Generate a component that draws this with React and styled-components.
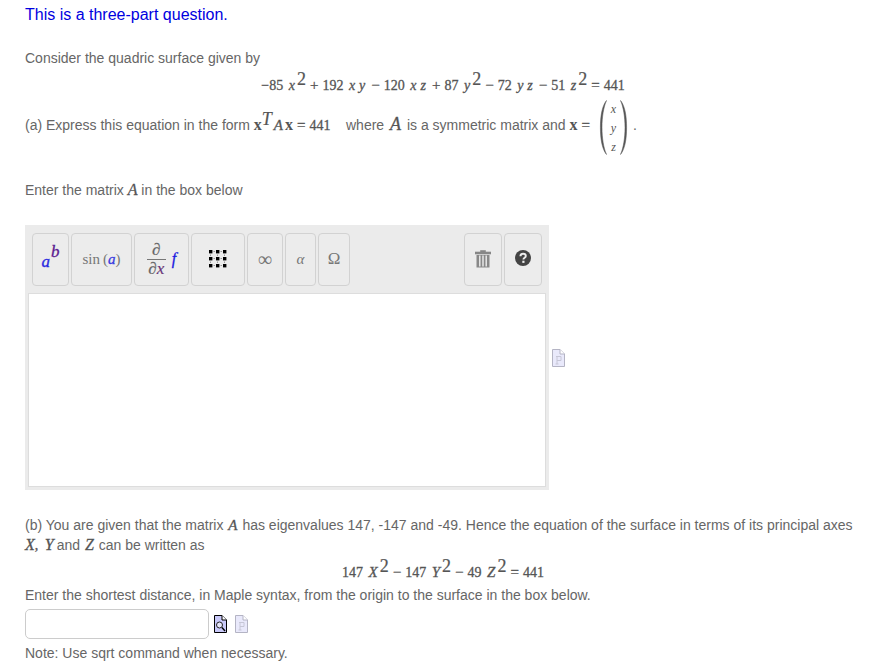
import React from 'react'
import styled, { createGlobalStyle } from 'styled-components'

const GlobalStyle = createGlobalStyle`
  html, body { margin: 0; padding: 0; background: #fff; }
  body { font-family: "Liberation Sans", Arial, sans-serif; font-size: 14px; color: #666; }
`
const Page = styled.div`
  width: 836px;
  padding: 5px 0 0 25px;
`
const Title = styled.div`
  font-size: 16px;
  line-height: 20px;
  color: #0000e0;
`
const Para = styled.div`
  line-height: 20px;
  margin-top: ${p => p.$top || 0}px;
`
const Equation = styled.div`
  text-align: center;
  line-height: 20px;
  margin-top: ${p => p.$top || 0}px;
`
const M = styled.span`
  font-family: "Liberation Serif", "DejaVu Serif", serif;
  font-size: 14px;
  color: #555;
  -webkit-text-stroke: 0.3px #555;
  white-space: pre;
`
const Op = styled(M)`
  margin: 0 4px;
  font-size: 15px;
`
const V = styled.i`
  font-family: "Liberation Serif", "DejaVu Serif", serif;
  font-size: ${p => p.$size || 14}px;
  color: #555;
  -webkit-text-stroke: 0.3px #555;
  padding: 0 ${p => p.$pad ?? 2}px;
`
const B = styled.b`
  font-family: "Liberation Serif", "DejaVu Serif", serif;
  font-size: 16px;
  color: #555;
`
const Sup = styled.sup`
  font-family: "Liberation Serif", "DejaVu Serif", serif;
  font-size: 18px;
  line-height: 0;
  vertical-align: 5px;
  color: #555;
  -webkit-text-stroke: 0.2px #555;
`
const Vector = styled.span`
  display: inline-flex;
  align-items: center;
  vertical-align: -25px;
  height: 57px;
  margin: 0 5px 0 5px;
`
const Entries = styled.span`
  display: flex;
  flex-direction: column;
  justify-content: space-between;
  align-items: center;
  width: 13px;
  height: 52px;
`
const Entry = styled.i`
  font-family: "Liberation Serif", serif;
  font-size: 12px;
  line-height: 14px;
  color: #555;
`
const EditorRow = styled.div`
  display: flex;
  align-items: center;
  margin-top: 25px;
`
const Editor = styled.div`
  width: 524px;
  height: 265px;
  box-sizing: border-box;
  background: #ebebeb;
  padding: 0 3px 3px;
  display: flex;
  flex-direction: column;
`
const Toolbar = styled.div`
  height: 68px;
  flex: none;
  display: flex;
  align-items: center;
  gap: 2px;
  padding: 0 4px;
`
const ToolButton = styled.div`
  width: ${p => p.$w}px;
  height: 53px;
  box-sizing: border-box;
  border: 1px solid #d2d2d2;
  border-radius: 4px;
  background: #ececec;
  display: flex;
  align-items: center;
  justify-content: center;
  font-family: "Liberation Serif", serif;
  font-size: ${p => p.$font || 15}px;
  color: #777;
  margin-left: ${p => p.$left || 0}px;
`
const EditArea = styled.div`
  flex: 1;
  background: #fff;
  border: 1px solid #ddd;
`
const Power = styled.span`
  font-size: 17px;
  font-style: italic;
  color: #2a2ae0;
  -webkit-text-stroke: 0.3px #2a2ae0;
  position: relative;
  top: 3px;
  & > span {
    position: relative;
    top: -10px;
    color: #5a1a90;
    -webkit-text-stroke: 0.3px #5a1a90;
    margin-left: 1px;
  }
`
const Blue = styled.i`
  color: #3a3ae0;
  -webkit-text-stroke: 0.3px #3a3ae0;
`
const Fraction = styled.span`
  display: inline-flex;
  flex-direction: column;
  align-items: center;
  font-size: 17px;
  line-height: 17px;
  color: #666;
  -webkit-text-stroke: 0.2px #666;
  & > span:first-child { border-bottom: 1px solid #777; padding-bottom: 1px; width: 19px; text-align: center; }
  & i { color: #6a2a80; }
`
const Fn = styled.i`
  color: #1a1ae0;
  font-size: 16px;
  -webkit-text-stroke: 0.3px #1a1ae0;
  margin-left: 6px;
`
const IconSvg = styled.svg`
  flex: none;
  display: block;
  margin-left: ${p => p.$left || 0}px;
`
const ToolIcon = styled.span`
  display: flex;
  margin-bottom: ${p => p.$lift || 0}px;
`
const AnswerRow = styled.div`
  display: flex;
  align-items: center;
  margin-top: 4px;
`
const AnswerInput = styled.div`
  width: 184px;
  height: 30px;
  box-sizing: border-box;
  border: 1px solid #ccc;
  border-radius: 5px;
  background: #fff;
  margin-right: 5px;
`

const PFile = ({ left }) => (
  <IconSvg $left={left} width="13" height="18" viewBox="0 0 13 18">
    <path d="M.5.5H8L12.5 5V17.5H.5Z" fill="#e9e9fb" stroke="#b4b4c4" />
    <path d="M8 .5V5H12.5" fill="#fff" stroke="#b4b4c4" />
    <path d="M4 7.5H9V11.5H5M5 7.5V15M3.5 15H6.5" fill="none" stroke="#c6c6d6" />
  </IconSvg>
)
const PreviewFile = () => (
  <IconSvg width="13" height="18" viewBox="0 0 13 18">
    <path d="M.5.5H8L12.5 5V17.5H.5Z" fill="#c8c8f8" stroke="#000" />
    <path d="M8 .5V5H12.5" fill="#fff" stroke="#000" />
    <circle cx="5.5" cy="10" r="3" fill="#e6e6fa" stroke="#222" />
    <path d="M8 12.5L11 16" stroke="#000" strokeWidth="1.4" />
  </IconSvg>
)
const Paren = ({ flip }) => (
  <svg width="8" height="55" viewBox="0 0 8 55" style={flip ? { transform: 'scaleX(-1)' } : undefined}>
    <path d="M7.5 .5C3 6 1.4 16 1.4 27.5S3 49 7.5 54.5C4.6 48 3 38 3 27.5S4.6 7 7.5 .5Z" fill="#555" stroke="#555" strokeWidth=".5" />
  </svg>
)
const MatrixIcon = () => (
  <svg width="20" height="20" viewBox="0 0 20 20">
    {[1, 8, 15].flatMap(y => [1, 8, 15].map(x => <rect key={x + '-' + y} x={x} y={y} width="3.4" height="3.4" fill="#000" />))}
    <path d="M5.5 2.5H7M12.5 2.5H14M5.5 9.5H7M12.5 9.5H14M5.5 16.5H7M12.5 16.5H14M2.5 5.5V7M9.5 5.5V7M16.5 5.5V7M2.5 12.5V14M9.5 12.5V14M16.5 12.5V14" stroke="#999" />
  </svg>
)
const TrashIcon = () => (
  <svg width="16" height="18" viewBox="0 0 16 18">
    <path d="M0 2H16V4H0ZM5.5 2V.5H10.5V2" fill="#888" stroke="#888" strokeWidth=".6" />
    <path d="M1.5 5H14.5V17.5H1.5Z" fill="#888" />
    <path d="M4.8 5.5V16.5M8 5.5V16.5M11.2 5.5V16.5" stroke="#eee" strokeWidth="1.4" />
  </svg>
)
const HelpIcon = () => (
  <svg width="16" height="16" viewBox="0 0 16 16">
    <circle cx="8" cy="8" r="8" fill="#444" />
    <path d="M5.4 6.2C5.5 4.6 6.6 3.7 8.1 3.7C9.7 3.7 10.8 4.7 10.8 6C10.8 7.9 8.4 7.8 8.4 9.6" fill="none" stroke="#eee" strokeWidth="1.9" />
    <rect x="7.3" y="10.7" width="2.2" height="2.2" fill="#eee" />
  </svg>
)

function App() {
  return (
    <Page>
      <GlobalStyle />
      <Title>This is a three-part question.</Title>
      <Para $top={23}>Consider the quadric surface given by</Para>
      <Equation $top={7}>
        <M>−85 </M><V>x</V><Sup>2</Sup><Op>+</Op><M>192 </M><V>x</V><V>y</V><Op>−</Op><M>120 </M><V>x</V><V>z</V>
        <Op>+</Op><M>87 </M><V>y</V><Sup>2</Sup><Op>−</Op><M>72 </M><V>y</V><V>z</V><Op>−</Op><M>51 </M><V>z</V><Sup>2</Sup><Op>=</Op><M>441</M>
      </Equation>
      <Para $top={3}>
        (a) Express this equation in the form <B>x</B><Sup as="i">T</Sup><V $size={15} $pad={2}>A</V><B>x</B><Op>=</Op><M>441</M>
        {'   '}&nbsp;&nbsp;&nbsp;where <V $size={18} $pad={2}>A</V> is a symmetric matrix and <B>x</B><Op>=</Op>
        <Vector>
          <Paren />
          <Entries><Entry>x</Entry><Entry>y</Entry><Entry>z</Entry></Entries>
          <Paren flip />
        </Vector>.
      </Para>
      <Para $top={24}>Enter the matrix <V $size={16} $pad={0}>A</V> in the box below</Para>
      <EditorRow>
        <Editor>
          <Toolbar>
            <ToolButton $w={37}><Power>a<span>b</span></Power></ToolButton>
            <ToolButton $w={61}>sin&thinsp;(<Blue>a</Blue>)</ToolButton>
            <ToolButton $w={55}>
              <Fraction><span>∂</span><span>∂<i>x</i></span></Fraction>
              <Fn>f</Fn>
            </ToolButton>
            <ToolButton $w={54}><MatrixIcon /></ToolButton>
            <ToolButton $w={36} $font={20}>∞</ToolButton>
            <ToolButton $w={31}><i>α</i></ToolButton>
            <ToolButton $w={32} $font={17}>Ω</ToolButton>
            <ToolButton $w={38} $left={112}><TrashIcon /></ToolButton>
            <ToolButton $w={38}><ToolIcon $lift={3}><HelpIcon /></ToolIcon></ToolButton>
          </Toolbar>
          <EditArea />
        </Editor>
        <PFile left={3} />
      </EditorRow>
      <Para $top={25}>
        (b) You are given that the matrix <V $size={15} $pad={1}>A</V> has eigenvalues 147, -147 and -49. Hence the equation of the surface in terms of its principal axes{' '}
        <V $size={16} $pad={0}>X</V><M>, </M><V $size={16} $pad={3}>Y</V>and <V $size={16} $pad={1}>Z</V> can be written as
      </Para>
      <Equation $top={6}>
        <M>147 </M><V $size={15}>X</V><Sup>2</Sup><Op>−</Op><M>147 </M><V $size={15}>Y</V><Sup>2</Sup><Op>−</Op><M>49 </M><V $size={15}>Z</V><Sup>2</Sup><Op>=</Op><M>441</M>
      </Equation>
      <Para $top={2}>Enter the shortest distance, in Maple syntax, from the origin to the surface in the box below.</Para>
      <AnswerRow>
        <AnswerInput />
        <PreviewFile />
        <PFile left={8} />
      </AnswerRow>
      <Para $top={4}>Note: Use sqrt command when necessary.</Para>
    </Page>
  )
}

export default App
